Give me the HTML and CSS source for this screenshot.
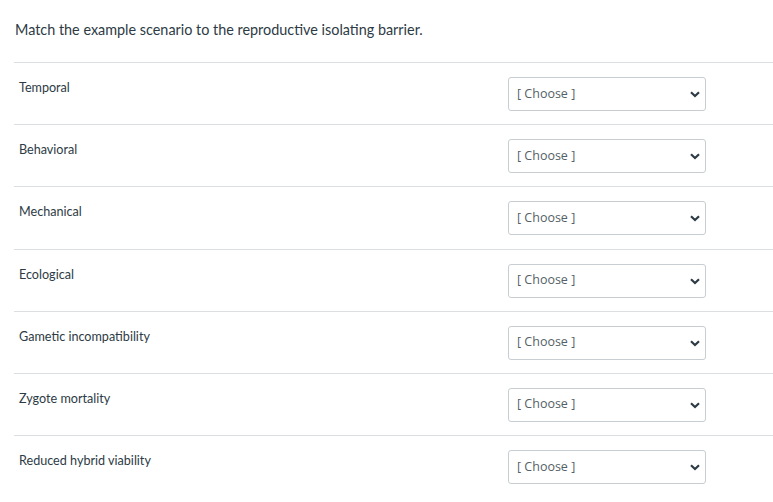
FILE: index.html
```html
<!DOCTYPE html>
<html>
<head>
<meta charset="utf-8">
<link rel="stylesheet" href="styles.css">
</head>
<body>
<div class="question">
  <p class="prompt">Match the example scenario to the reproductive isolating barrier.</p>
  <div class="rows">
    <div class="row"><div class="label">Temporal</div><div class="select"><span class="val">[ Choose ]</span><svg class="chev" viewBox="0 0 10 7" width="10" height="7"><path d="M1 1.2 L5 5 L9 1.2" fill="none" stroke="#2d3b45" stroke-width="2.2"/></svg></div></div>
    <div class="row"><div class="label">Behavioral</div><div class="select"><span class="val">[ Choose ]</span><svg class="chev" viewBox="0 0 10 7" width="10" height="7"><path d="M1 1.2 L5 5 L9 1.2" fill="none" stroke="#2d3b45" stroke-width="2.2"/></svg></div></div>
    <div class="row"><div class="label">Mechanical</div><div class="select"><span class="val">[ Choose ]</span><svg class="chev" viewBox="0 0 10 7" width="10" height="7"><path d="M1 1.2 L5 5 L9 1.2" fill="none" stroke="#2d3b45" stroke-width="2.2"/></svg></div></div>
    <div class="row"><div class="label">Ecological</div><div class="select"><span class="val">[ Choose ]</span><svg class="chev" viewBox="0 0 10 7" width="10" height="7"><path d="M1 1.2 L5 5 L9 1.2" fill="none" stroke="#2d3b45" stroke-width="2.2"/></svg></div></div>
    <div class="row"><div class="label">Gametic incompatibility</div><div class="select"><span class="val">[ Choose ]</span><svg class="chev" viewBox="0 0 10 7" width="10" height="7"><path d="M1 1.2 L5 5 L9 1.2" fill="none" stroke="#2d3b45" stroke-width="2.2"/></svg></div></div>
    <div class="row"><div class="label">Zygote mortality</div><div class="select"><span class="val">[ Choose ]</span><svg class="chev" viewBox="0 0 10 7" width="10" height="7"><path d="M1 1.2 L5 5 L9 1.2" fill="none" stroke="#2d3b45" stroke-width="2.2"/></svg></div></div>
    <div class="row"><div class="label">Reduced hybrid viability</div><div class="select"><span class="val">[ Choose ]</span><svg class="chev" viewBox="0 0 10 7" width="10" height="7"><path d="M1 1.2 L5 5 L9 1.2" fill="none" stroke="#2d3b45" stroke-width="2.2"/></svg></div></div>
  </div>
</div>
</body>
</html>
```

FILE: styles.css
```css
html, body {
  margin: 0;
  padding: 0;
  background: #ffffff;
}
body {
  font-family: Lato, "Liberation Sans", sans-serif;
  color: #2d3b45;
}
.question {
  padding-left: 14px;
}
.prompt {
  margin: 0;
  padding: 20px 0 0 1px;
  height: 42px;
  font-size: 14.4px;
  line-height: 20px;
  color: #2d3b45;
}
.row {
  display: flex;
  align-items: flex-start;
  border-top: 1px solid #dcdfe1;
  height: 61.2px;
}
.label {
  width: 494px;
  padding: 16px 0 0 5px;
  box-sizing: border-box;
  font-size: 12.6px;
  line-height: 18px;
  color: #2d3b45;
}
.select {
  margin-top: 14px;
  width: 198px;
  height: 34px;
  box-sizing: border-box;
  border: 1px solid #c7cdd1;
  border-radius: 3px;
  display: flex;
  align-items: center;
  justify-content: space-between;
  padding: 0 5px 0 8px;
}
.val {
  font-family: "Open Sans", "Liberation Sans", sans-serif;
  font-size: 12.5px;
  line-height: 16px;
  margin-top: -1px;
  color: #555f66;
}
.chev {
  display: block;
  margin-top: 1px;
}
```
